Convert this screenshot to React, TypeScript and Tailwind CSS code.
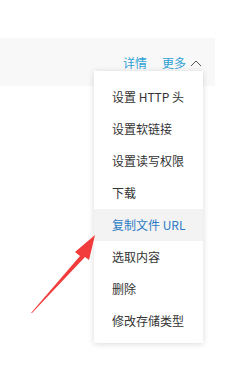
const items = ['设置 HTTP 头', '设置软链接', '设置读写权限', '下载', '复制文件 URL', '选取内容', '删除', '修改存储类型']

export default function App() {
  return (
    <div
      className="relative w-[231px] h-[387px] bg-white overflow-hidden text-[12px]"
      style={{ fontFamily: '"Noto Sans CJK SC", "Noto Sans", sans-serif' }}
    >
      <div className="h-[38px]" />
      <div className="w-[215px] h-[48px] bg-[#f8f8f8] flex items-center justify-end pr-[13px] pt-[1px]">
        <span className="text-[#2ea0d6] mr-[15px]">详情</span>
        <span className="text-[#2ea0d6]">更多</span>
        <svg width="12" height="8" viewBox="0 0 12 8" className="ml-[4px]">
          <path d="M1 7 L6 2 L11 7" fill="none" stroke="#555" strokeWidth="1" />
        </svg>
      </div>

      <div className="absolute left-[94px] top-[71px] w-[109px] bg-white pt-[10px] pb-[6px] shadow-[0_1px_6px_rgba(0,0,0,0.15)]">
        {items.map((t, i) => (
          <div
            key={t}
            className={
              i === 4
                ? 'h-[32px] flex items-center pl-[18px] bg-[#f3f3f3] text-[#2b7bc4]'
                : 'h-[32px] flex items-center pl-[18px] text-[#333]'
            }
          >
            {t}
          </div>
        ))}
      </div>

      {/* red arrow pointing at the highlighted item */}
      <svg className="absolute left-0 top-0" width="231" height="387" viewBox="0 0 231 387">
        <path
          d="M31 313 L80 256 L75 252 L95 235 L89 260 L85 257 L32 313 Z"
          fill="#f23b3b"
        />
      </svg>
    </div>
  )
}
